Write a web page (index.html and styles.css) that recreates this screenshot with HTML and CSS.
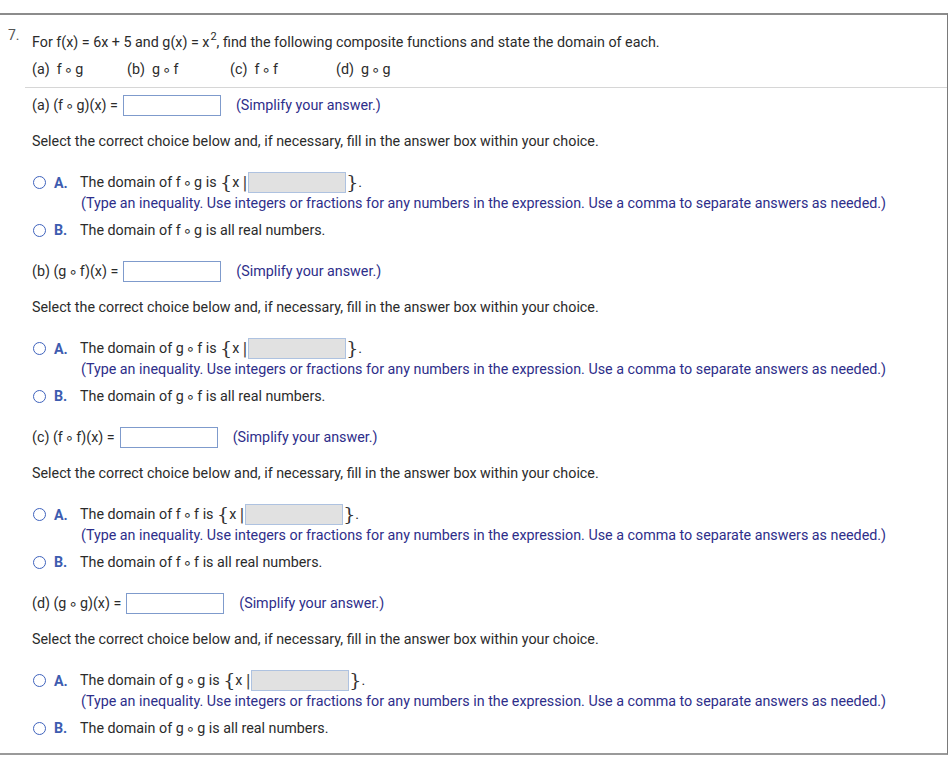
FILE: index.html
```html
<!DOCTYPE html>
<html>
<head>
<meta charset="utf-8">
<link rel="stylesheet" href="styles.css">
</head>
<body>
<div class="frame">
  <div class="qnum">7.</div>
  <div class="qbody">
    <div class="stem">For f(x) = 6x + 5 and g(x) = x<sup class="sup">2</sup>, find the following composite functions and state the domain of each.</div>
    <div class="parts">
      <span class="part pa">(a)&nbsp; f <span class="o">∘</span> g</span>
      <span class="part pb">(b)&nbsp; g <span class="o">∘</span> f</span>
      <span class="part pc">(c)&nbsp; f <span class="o">∘</span> f</span>
      <span class="part pd">(d)&nbsp; g <span class="o">∘</span> g</span>
    </div>
    <div class="sep"></div>

    <div class="section">
      <div class="eq"><span>(a) (f <span class="o">∘</span> g)(x) =</span><span class="box"></span><span class="hint">(Simplify your answer.)</span></div>
      <div class="select">Select the correct choice below and, if necessary, fill in the answer box within your choice.</div>
      <div class="choice ca"><span class="radio"></span><span class="lbl">A.</span><span class="ctext">The domain of f <span class="o">∘</span> g is <span class="brace">{</span>x <span class="bar">|</span><span class="gbox"></span><span class="brace">}</span>.</span></div>
      <div class="type">(Type an inequality. Use integers or fractions for any numbers in the expression. Use a comma to separate answers as needed.)</div>
      <div class="choice cb"><span class="radio"></span><span class="lbl">B.</span><span class="ctext">The domain of f <span class="o">∘</span> g is all real numbers.</span></div>
    </div>

    <div class="section">
      <div class="eq"><span>(b) (g <span class="o">∘</span> f)(x) =</span><span class="box"></span><span class="hint">(Simplify your answer.)</span></div>
      <div class="select">Select the correct choice below and, if necessary, fill in the answer box within your choice.</div>
      <div class="choice ca"><span class="radio"></span><span class="lbl">A.</span><span class="ctext">The domain of g <span class="o">∘</span> f is <span class="brace">{</span>x <span class="bar">|</span><span class="gbox"></span><span class="brace">}</span>.</span></div>
      <div class="type">(Type an inequality. Use integers or fractions for any numbers in the expression. Use a comma to separate answers as needed.)</div>
      <div class="choice cb"><span class="radio"></span><span class="lbl">B.</span><span class="ctext">The domain of g <span class="o">∘</span> f is all real numbers.</span></div>
    </div>

    <div class="section">
      <div class="eq"><span>(c) (f <span class="o">∘</span> f)(x) =</span><span class="box"></span><span class="hint">(Simplify your answer.)</span></div>
      <div class="select">Select the correct choice below and, if necessary, fill in the answer box within your choice.</div>
      <div class="choice ca"><span class="radio"></span><span class="lbl">A.</span><span class="ctext">The domain of f <span class="o">∘</span> f is <span class="brace">{</span>x <span class="bar">|</span><span class="gbox"></span><span class="brace">}</span>.</span></div>
      <div class="type">(Type an inequality. Use integers or fractions for any numbers in the expression. Use a comma to separate answers as needed.)</div>
      <div class="choice cb"><span class="radio"></span><span class="lbl">B.</span><span class="ctext">The domain of f <span class="o">∘</span> f is all real numbers.</span></div>
    </div>

    <div class="section last">
      <div class="eq"><span>(d) (g <span class="o">∘</span> g)(x) =</span><span class="box"></span><span class="hint">(Simplify your answer.)</span></div>
      <div class="select">Select the correct choice below and, if necessary, fill in the answer box within your choice.</div>
      <div class="choice ca"><span class="radio"></span><span class="lbl">A.</span><span class="ctext">The domain of g <span class="o">∘</span> g is <span class="brace">{</span>x <span class="bar">|</span><span class="gbox"></span><span class="brace">}</span>.</span></div>
      <div class="type">(Type an inequality. Use integers or fractions for any numbers in the expression. Use a comma to separate answers as needed.)</div>
      <div class="choice cb"><span class="radio"></span><span class="lbl">B.</span><span class="ctext">The domain of g <span class="o">∘</span> g is all real numbers.</span></div>
    </div>
  </div>
</div>
</body>
</html>
```

FILE: styles.css
```css
html, body {
  margin: 0;
  padding: 0;
  background: #ffffff;
}
body {
  font-family: Roboto, "Liberation Sans", Arial, sans-serif;
  font-size: 14.3px;
  color: #2b2b2b;
}
.frame {
  margin-top: 13px;
  width: 948px;
  height: 742px;
  box-sizing: border-box;
  border-top: 2px solid #8c8c8c;
  border-right: 1px solid #7a7a7a;
  border-bottom: 2px solid #9a9a9a;
  display: flex;
}
.qnum {
  width: 25px;
  box-sizing: border-box;
  padding-left: 8px;
  padding-top: 12px;
  font-size: 14px;
  line-height: 16px;
  color: #555;
}
.qbody {
  flex: 1;
  padding-top: 17px;
}
.stem, .parts, .select, .type {
  line-height: 20px;
  padding-left: 7px;
  white-space: nowrap;
}
.sup {
  font-size: 11px;
  vertical-align: 7px;
  line-height: 0;
  margin-left: 1px;
}
.parts {
  margin-top: 7px;
  display: flex;
}
.part { display: inline-block; white-space: pre; }
.pa { width: 95px; }
.pb { width: 103px; }
.pc { width: 106px; }
.o {
  font-family: "DejaVu Sans", sans-serif;
  font-size: 15px;
  line-height: 0;
  vertical-align: -1px;
  margin: 0 -1.5px;
}
.sep {
  margin-top: 8px;
  height: 1px;
  background: #d6d6d6;
}
.section {
  padding-top: 6px;
  padding-bottom: 13px;
  height: 166px;
  box-sizing: border-box;
}
.eq {
  display: flex;
  align-items: center;
  height: 22px;
  padding-left: 7px;
  white-space: pre;
}
.box {
  width: 96px;
  height: 19px;
  border: 1px solid #7f9bcc;
  margin-left: 5px;
  background: #fff;
}
.hint {
  margin-left: 15px;
  color: #2e2e8a;
}
.select {
  margin-top: 15px;
}
.choice {
  display: flex;
  align-items: center;
  height: 21px;
  padding-left: 8px;
  overflow: visible;
}
.ca {
  margin-top: 21px;
}
.cb {
  margin-top: 6px;
  height: 22px;
}
.radio {
  width: 11px;
  height: 11px;
  border: 1.7px solid #3f63bd;
  border-radius: 50%;
  box-sizing: content-box;
  flex: none;
}
.lbl {
  margin-left: 8px;
  width: 26px;
  font-weight: bold;
  color: #3d5cb0;
}
.ctext {
  white-space: pre;
  line-height: 21px;
}
.brace {
  display: inline-block;
  font-size: 19px;
  line-height: 19px;
  vertical-align: -2px;
  color: #333;
  font-family: "DejaVu Serif", serif;
  font-weight: 300;
}
.bar {
  display: inline-block;
  font-size: 18px;
  line-height: 18px;
  vertical-align: -2px;
  color: #444;
}
.gbox {
  display: inline-block;
  width: 96px;
  height: 19px;
  background: #e1e1e1;
  border: 1px solid #aec2e0;
  margin-left: 1px;
  vertical-align: -6px;
}
.type {
  padding-left: 56px;
  color: #2e2e8a;
}
```
